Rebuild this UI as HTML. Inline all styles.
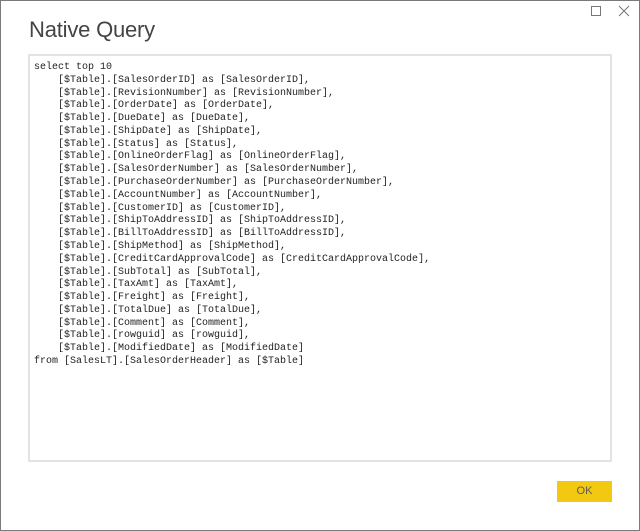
<!DOCTYPE html>
<html><head><style>
body{margin:0;width:640px;height:531px;background:#fff;overflow:hidden;font-family:"Liberation Sans",sans-serif}
.frame{position:absolute;left:0;top:0;width:638px;height:529px;border:1px solid #7a7a7a}
.title{position:absolute;left:29px;top:17px;font-size:22px;color:#444;letter-spacing:-0.2px}
.box{position:absolute;left:28px;top:54px;width:580px;height:404px;border:2px solid #e3e3e3}
pre{position:absolute;left:34px;top:62px;margin:0;font-family:"Liberation Mono",monospace;font-size:10px;line-height:12.78px;color:#222}
.ok{position:absolute;left:557px;top:481px;width:55px;height:21px;background:#f2c811;color:#5a5a5a;font-size:11px;text-align:center;line-height:21px}
</style></head><body>
<div class="frame"></div>
<svg style="position:absolute;left:588px;top:4px" width="46" height="14">
<rect x="3.5" y="2.5" width="9" height="9" fill="none" stroke="#777" stroke-width="1"/>
<path d="M31 2 L41 12 M41 2 L31 12" stroke="#777" stroke-width="1"/>
</svg>
<div class="title">Native Query</div>
<div class="box"></div>
<pre>select top 10
    [$Table].[SalesOrderID] as [SalesOrderID],
    [$Table].[RevisionNumber] as [RevisionNumber],
    [$Table].[OrderDate] as [OrderDate],
    [$Table].[DueDate] as [DueDate],
    [$Table].[ShipDate] as [ShipDate],
    [$Table].[Status] as [Status],
    [$Table].[OnlineOrderFlag] as [OnlineOrderFlag],
    [$Table].[SalesOrderNumber] as [SalesOrderNumber],
    [$Table].[PurchaseOrderNumber] as [PurchaseOrderNumber],
    [$Table].[AccountNumber] as [AccountNumber],
    [$Table].[CustomerID] as [CustomerID],
    [$Table].[ShipToAddressID] as [ShipToAddressID],
    [$Table].[BillToAddressID] as [BillToAddressID],
    [$Table].[ShipMethod] as [ShipMethod],
    [$Table].[CreditCardApprovalCode] as [CreditCardApprovalCode],
    [$Table].[SubTotal] as [SubTotal],
    [$Table].[TaxAmt] as [TaxAmt],
    [$Table].[Freight] as [Freight],
    [$Table].[TotalDue] as [TotalDue],
    [$Table].[Comment] as [Comment],
    [$Table].[rowguid] as [rowguid],
    [$Table].[ModifiedDate] as [ModifiedDate]
from [SalesLT].[SalesOrderHeader] as [$Table]</pre>
<div class="ok">OK</div>
</body></html>
